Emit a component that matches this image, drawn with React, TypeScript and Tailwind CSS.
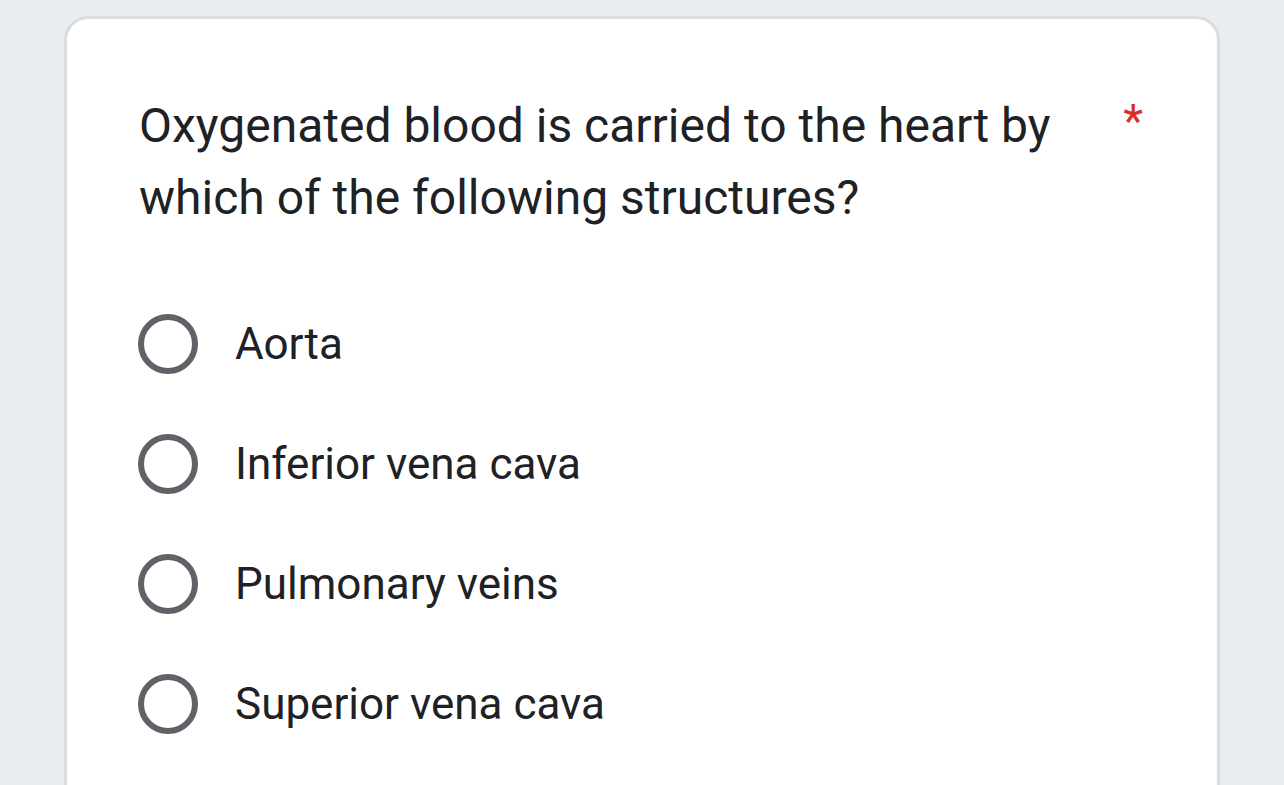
export default function App() {
  const options = ["Aorta", "Inferior vena cava", "Pulmonary veins", "Superior vena cava"];

  return (
    <div className="min-h-[785px] bg-[#e9edf0] pt-4 pl-16 font-['Roboto',sans-serif] text-[#202124]">
      <div className="w-[1156px] h-[800px] rounded-t-[24px] border-[3px] border-[#dadce0] bg-white pl-[72px] pr-[70px] pt-[71px]">
        {/* Question */}
        <div className="flex items-start">
          <div className="w-[960px] text-[48px] leading-[72px]">
            Oxygenated blood is carried to the heart by which of the following structures?
          </div>
          <span className="ml-auto -mt-[5px] pr-[4px] text-[46px] leading-[72px] text-[#d93025]">*</span>
        </div>

        {/* Options */}
        <div className="mt-[80px] flex flex-col gap-[60px]">
          {options.map((o) => (
            <label key={o} className="flex h-[60px] items-center -ml-[1px]">
              <span className="h-[60px] w-[60px] shrink-0 rounded-full border-[6px] border-[#5f6368]" />
              <span className="ml-[37px] text-[44px] leading-[60px]">{o}</span>
            </label>
          ))}
        </div>
      </div>
    </div>
  );
}
